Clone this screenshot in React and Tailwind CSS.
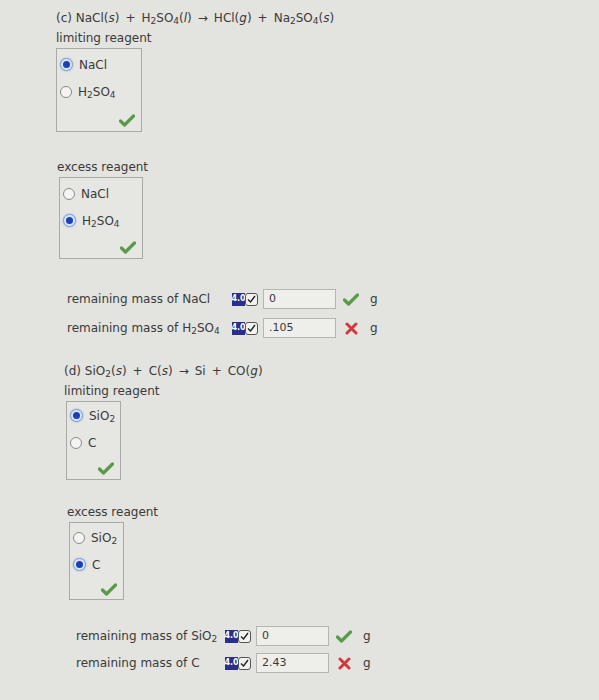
import React from 'react';

const font = "font-['DejaVu_Sans','Verdana',sans-serif]";

function Radio({ checked }) {
  return checked ? (
    <span className="inline-flex h-[13px] w-[13px] shrink-0 items-center justify-center rounded-full border border-[#7ea3d8] bg-[#dbe6f5] shadow-[0_0_2px_#7aa6e8]">
      <span className="h-[7px] w-[7px] rounded-full bg-[#1d3fb8]" />
    </span>
  ) : (
    <span className="inline-block h-[12px] w-[12px] shrink-0 rounded-full border border-[#8a8a8a] bg-[#f4f4f2]" />
  );
}

function Check() {
  return (
    <svg width="16" height="13" viewBox="0 0 16 13">
      <path d="M1.5 7 L5.5 11 L14.5 2" fill="none" stroke="#5b9a4b" strokeWidth="3.2" strokeLinecap="round" strokeLinejoin="round" />
    </svg>
  );
}

function Cross() {
  return (
    <svg width="13" height="13" viewBox="0 0 13 13">
      <path d="M2 2 L11 11 M11 2 L2 11" stroke="#d3393a" strokeWidth="3" strokeLinecap="round" />
    </svg>
  );
}

function SigFig() {
  return (
    <span className="inline-flex h-[15px] shrink-0 items-center">
      <span className="flex h-[13px] w-[13px] items-center justify-center bg-[#2a2f8c] text-[8px] font-bold leading-none text-white">
        4.0
      </span>
      <span className="flex h-[13px] w-[13px] items-center justify-center rounded-[3px] border border-[#555] bg-[#f2f2f0]">
        <svg width="9" height="8" viewBox="0 0 9 8">
          <path d="M1 4.5 L3.5 7 L8 1" fill="none" stroke="#222" strokeWidth="1.4" />
        </svg>
      </span>
    </span>
  );
}

function ChoiceBox({ width, height, options, top = 7 }) {
  return (
    <div
      className="flex flex-col border border-[#a9a9a6] bg-[#e6e6e2] pl-[3px] pr-[6px]"
      style={{ width, height, paddingTop: top }}
    >
      {options.map((o, i) => (
        <div key={i} className="mb-[10px] flex h-[17px] items-center gap-[6px]">
          <Radio checked={o.checked} />
          <span className="whitespace-nowrap">{o.label}</span>
        </div>
      ))}
      <div className="mt-auto mb-[4px] flex justify-end">
        <Check />
      </div>
    </div>
  );
}

function MassRow({ label, labelWidth, value, correct }) {
  return (
    <div className="flex h-[20px] items-center">
      <span className="shrink-0" style={{ width: labelWidth }}>
        {label}
      </span>
      <SigFig />
      <div className="ml-[5px] flex h-[20px] w-[73px] items-center border border-[#b5b5b2] bg-[#eeeeeb] px-[5px] text-[11px]">
        {value}
      </div>
      <span className="ml-[7px] flex w-[16px] justify-center">{correct ? <Check /> : <Cross />}</span>
      <span className="ml-[11px]">g</span>
    </div>
  );
}

const H2SO4 = (
  <>
    H<sub>2</sub>SO<sub>4</sub>
  </>
);
const SiO2 = (
  <>
    SiO<sub>2</sub>
  </>
);

function Op({ children }) {
  return <span className="mx-[6px]">{children}</span>;
}

export default function App() {
  return (
    <div className={`h-[700px] w-[599px] overflow-hidden bg-[#e3e3df] text-[12px] leading-[20px] text-[#3a3a3a] ${font}`}>
      {/* part c */}
      <div className="ml-[56px] pt-[8px]">
        <div className="whitespace-nowrap">
          (c) NaCl(<i>s</i>)<Op>+</Op>H<sub>2</sub>SO<sub>4</sub>(<i>l</i>)<Op>→</Op>HCl(<i>g</i>)<Op>+</Op>Na<sub>2</sub>SO<sub>4</sub>(<i>s</i>)
        </div>
        <div>limiting reagent</div>
        <ChoiceBox
          width={86}
          height={84}
          options={[
            { label: 'NaCl', checked: true },
            { label: H2SO4, checked: false },
          ]}
        />
      </div>

      <div className="ml-[57px] mt-[25px]">
        <div>excess reagent</div>
        <div className="ml-[2px]">
          <ChoiceBox
            width={84}
            height={82}
            options={[
              { label: 'NaCl', checked: false },
              { label: H2SO4, checked: true },
            ]}
          />
        </div>
      </div>

      <div className="ml-[67px] mt-[30px] flex flex-col gap-[9px]">
        <MassRow label="remaining mass of NaCl" labelWidth={165} value="0" correct />
        <MassRow label={<>remaining mass of {H2SO4}</>} labelWidth={165} value=".105" correct={false} />
      </div>

      {/* part d */}
      <div className="ml-[64px] mt-[23px]">
        <div className="whitespace-nowrap">
          (d) SiO<sub>2</sub>(<i>s</i>)<Op>+</Op>C(<i>s</i>)<Op>→</Op>Si<Op>+</Op>CO(<i>g</i>)
        </div>
        <div>limiting reagent</div>
        <div className="ml-[2px]">
          <ChoiceBox
            width={55}
            height={79}
            top={5}
            options={[
              { label: SiO2, checked: true },
              { label: 'C', checked: false },
            ]}
          />
        </div>
      </div>

      <div className="ml-[67px] mt-[22px]">
        <div>excess reagent</div>
        <div className="ml-[2px]">
          <ChoiceBox
            width={55}
            height={78}
            top={6}
            options={[
              { label: SiO2, checked: false },
              { label: 'C', checked: true },
            ]}
          />
        </div>
      </div>

      <div className="ml-[76px] mt-[26px] flex flex-col gap-[7px]">
        <MassRow label={<>remaining mass of {SiO2}</>} labelWidth={149} value="0" correct />
        <MassRow label="remaining mass of C" labelWidth={149} value="2.43" correct={false} />
      </div>
    </div>
  );
}
